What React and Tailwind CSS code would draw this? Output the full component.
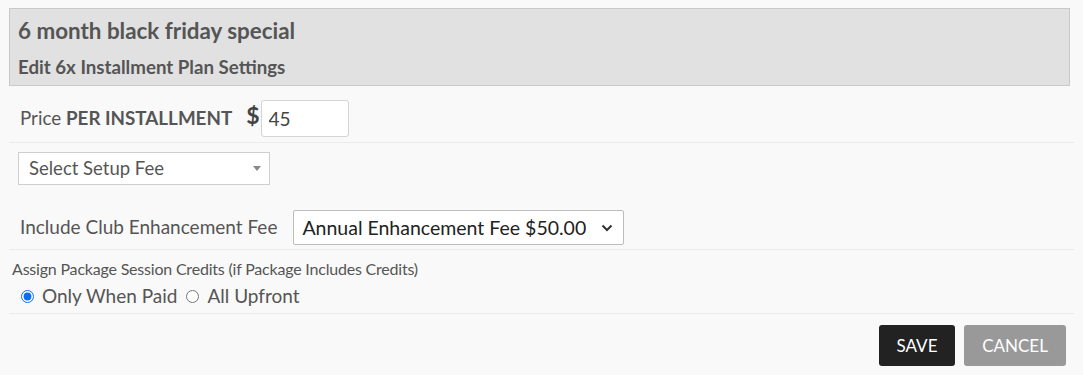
import React, { useState } from 'react';

const Divider = () => <div className="h-px bg-[#ebebeb]" />;

export default function App() {
    const [price, setPrice] = useState('45');
    const [credits, setCredits] = useState('paid');

    return (
        <div className="min-h-[375px] bg-[#f9f9f9] text-[#555] px-[9px] pt-[8px] font-['Lato','Liberation_Sans',sans-serif]">
            <div className="h-[78px] bg-[#e1e1e1] border border-[#c9c9c9] pl-[8px] pt-[7px] mr-[4px]">
                <h2 className="text-[22.4px] font-bold leading-[30px]">6 month black friday special</h2>
                <h3 className="text-[18.7px] font-bold leading-[24px] mt-[9px]">Edit 6x Installment Plan Settings</h3>
            </div>

            {/* price per installment */}
            <div className="flex items-center h-[56px] pl-[11px] pt-[8px]">
                <span className="text-[18.8px]">Price <b>PER INSTALLMENT</b></span>
                <span className="ml-[14px] text-[23px] font-bold text-[#444] -mt-[6px]">$</span>
                <input
                    value={price}
                    onChange={(e) => setPrice(e.target.value)}
                    className="ml-[1px] w-[88px] h-[37px] bg-white border border-[#d4d4d4] rounded-[3px] px-[7px] text-[19px] text-[#444] outline-none"
                />
            </div>
            <Divider />

            <div className="pt-[9px] pl-[9px] h-[58px]">
                <div className="w-[252px] h-[33px] bg-white border border-[#cfcfcf] flex items-center justify-between pl-[10px] pr-[8px]">
                    <span className="text-[18.5px] text-[#555]">Select Setup Fee</span>
                    <svg width="8" height="5" viewBox="0 0 8 5"><path d="M0 0h8L4 5z" fill="#888" /></svg>
                </div>
            </div>

            <div className="flex items-center h-[48px] pl-[11px] pt-[5px]">
                <span className="text-[19px]">Include Club Enhancement Fee</span>
                <div className="ml-[16px] w-[331px] h-[35px] bg-white border border-[#bdbdbd] rounded-[2px] flex items-center justify-between pl-[8px] pr-[10px]">
                    <span className="text-[19.5px] text-[#222]">Annual Enhancement Fee $50.00</span>
                    <svg width="12" height="8" viewBox="0 0 12 8"><path d="M1.5 1.5L6 6l4.5-4.5" stroke="#333" strokeWidth="2" fill="none" /></svg>
                </div>
            </div>
            <Divider />

            <div className="pl-[3px] pt-[7px] h-[63px]">
                <div className="text-[16px] tracking-[-0.2px] leading-[24px]">Assign Package Session Credits (if Package Includes Credits)</div>
                <div className="flex items-center text-[19px] leading-[24px] mt-[3px] pl-[9px]">
                    <label className="flex items-center">
                        <input type="radio" name="credits" checked={credits === 'paid'} onChange={() => setCredits('paid')} className="w-[13px] h-[13px] accent-[#0b6cf5] m-0" />
                        <span className="ml-[8px]">Only When Paid</span>
                    </label>
                    <label className="flex items-center ml-[9px]">
                        <input type="radio" name="credits" checked={credits === 'all'} onChange={() => setCredits('all')} className="w-[13px] h-[13px] m-0" />
                        <span className="ml-[8px]">All Upfront</span>
                    </label>
                </div>
            </div>
            <Divider />

            <div className="flex justify-end gap-[9px] pt-[11px] pr-[8px]">
                <button className="w-[76px] h-[41px] bg-[#222] text-white text-[17px] rounded-[3px]">SAVE</button>
                <button className="w-[102px] h-[41px] bg-[#999] text-white text-[17px] rounded-[3px]">CANCEL</button>
            </div>
        </div>
    );
}
